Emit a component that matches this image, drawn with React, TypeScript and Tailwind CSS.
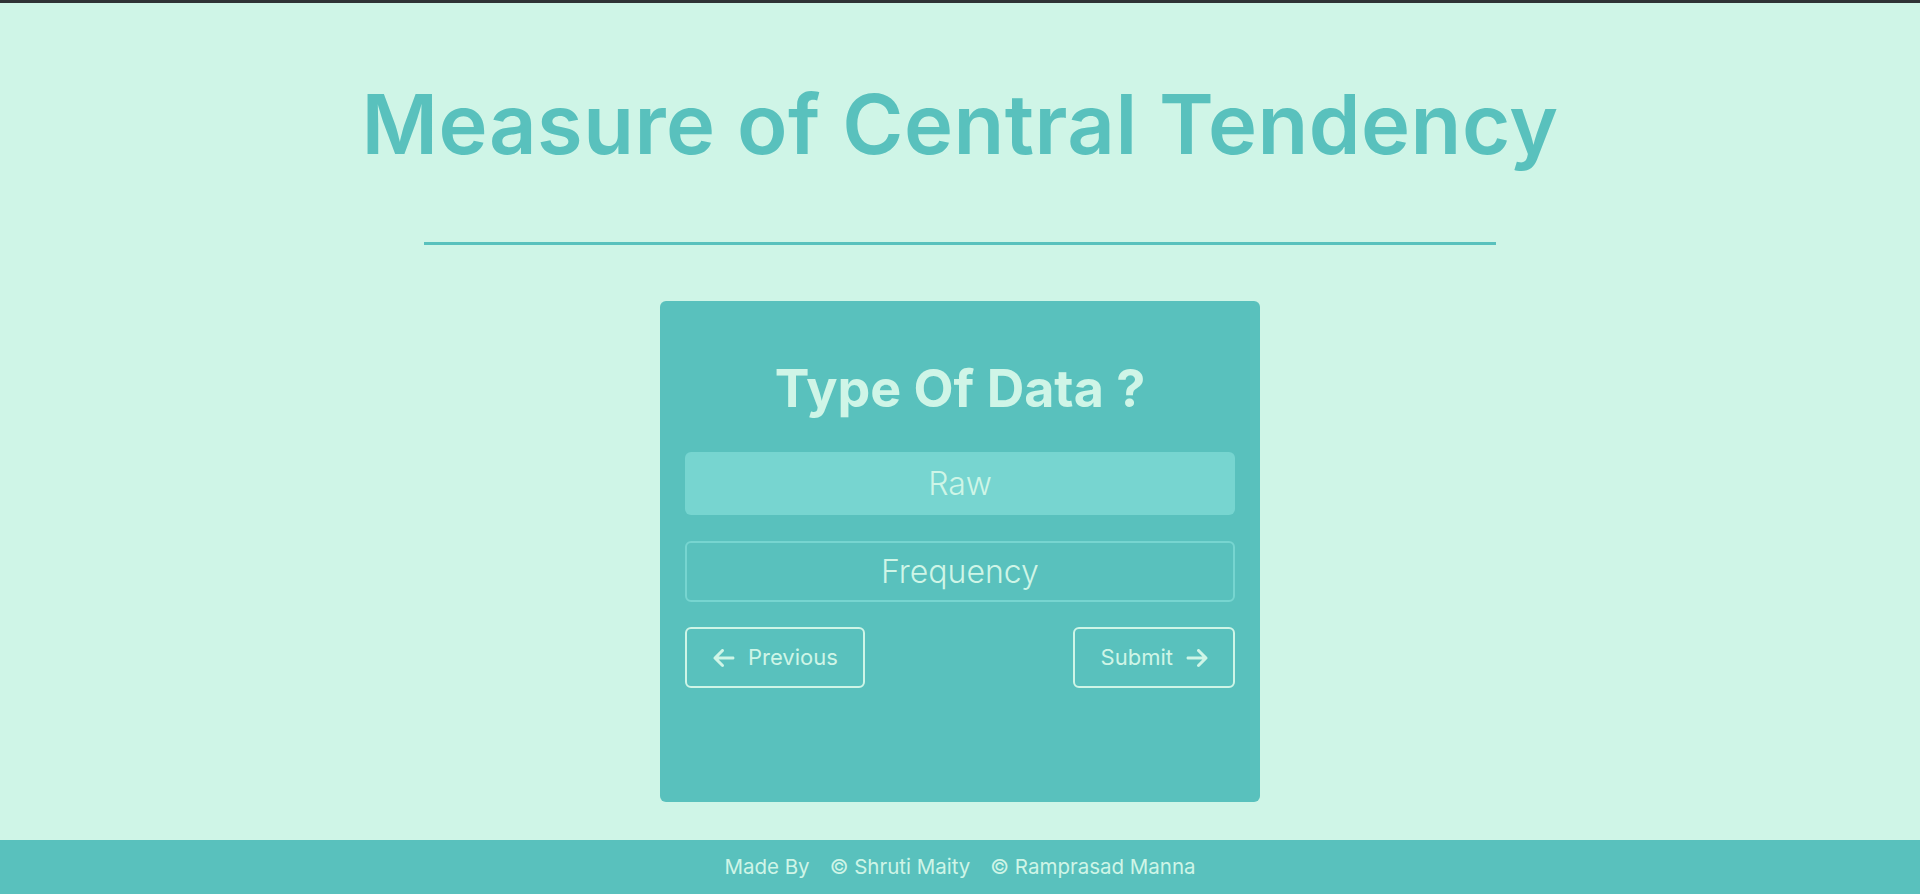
import React, { useState } from 'react';
import { FaArrowLeft, FaArrowRight } from 'react-icons/fa6';

const FONT = "font-['Inter','Noto_Sans',sans-serif]";

export default function App() {
  const [type, setType] = useState<'raw' | 'frequency'>('raw');

  return (
    <div className={`min-h-screen flex flex-col bg-[#cff5e7] ${FONT}`}>
      {/* top strip */}
      <div className="h-[3px] bg-[#2f3336]" />

      {/* Title */}
      <h1 className="pt-[73px] text-center text-[83px] leading-[96px] font-semibold text-[#59c1bd] tracking-[0.5px]">
        Measure of Central Tendency
      </h1>
      <div className="mt-[70px] mx-auto w-[1072px] h-[3px] bg-[#59c1bd]" />

      {/* Card */}
      <div className="mt-[56px] mx-auto w-[600px] h-[501px] bg-[#59c1bd] rounded-md px-[25px] pt-[59px]">
        <h2 className="text-center text-[52px] leading-[58px] font-bold text-[#cff5e7]">
          Type Of Data ?
        </h2>

        <div className="mt-[34px] flex flex-col gap-[26px]">
          <button
            onClick={() => setType('raw')}
            className={`h-[63px] w-full rounded-md text-[32px] font-light text-[#cff5e7] ${
              type === 'raw' ? 'bg-[#77d5d0]' : 'border-2 border-[#77d5d0]'
            }`}
          >
            Raw
          </button>
          <button
            onClick={() => setType('frequency')}
            className={`h-[61px] w-full rounded-md text-[32px] font-light text-[#cff5e7] ${
              type === 'frequency' ? 'bg-[#77d5d0]' : 'border-2 border-[#77d5d0]'
            }`}
          >
            Frequency
          </button>
        </div>

        <div className="mt-[25px] flex justify-between">
          <button className="h-[61px] px-[25px] flex items-center gap-3 border-2 border-[#cff5e7] rounded-md text-[22px] text-[#cff5e7]">
            <FaArrowLeft className="text-[24px]" />
            Previous
          </button>
          <button className="h-[61px] pl-[26px] pr-[24px] flex items-center gap-3 border-2 border-[#cff5e7] rounded-md text-[22px] text-[#cff5e7]">
            Submit
            <FaArrowRight className="text-[24px]" />
          </button>
        </div>
      </div>

      {/* Footer */}
      <footer className="mt-auto h-[54px] bg-[#59c1bd] flex items-center justify-center gap-5 text-[20.5px] text-[#cff5e7]">
        <span>Made By</span>
        <span>© Shruti Maity</span>
        <span>© Ramprasad Manna</span>
      </footer>
    </div>
  );
}
